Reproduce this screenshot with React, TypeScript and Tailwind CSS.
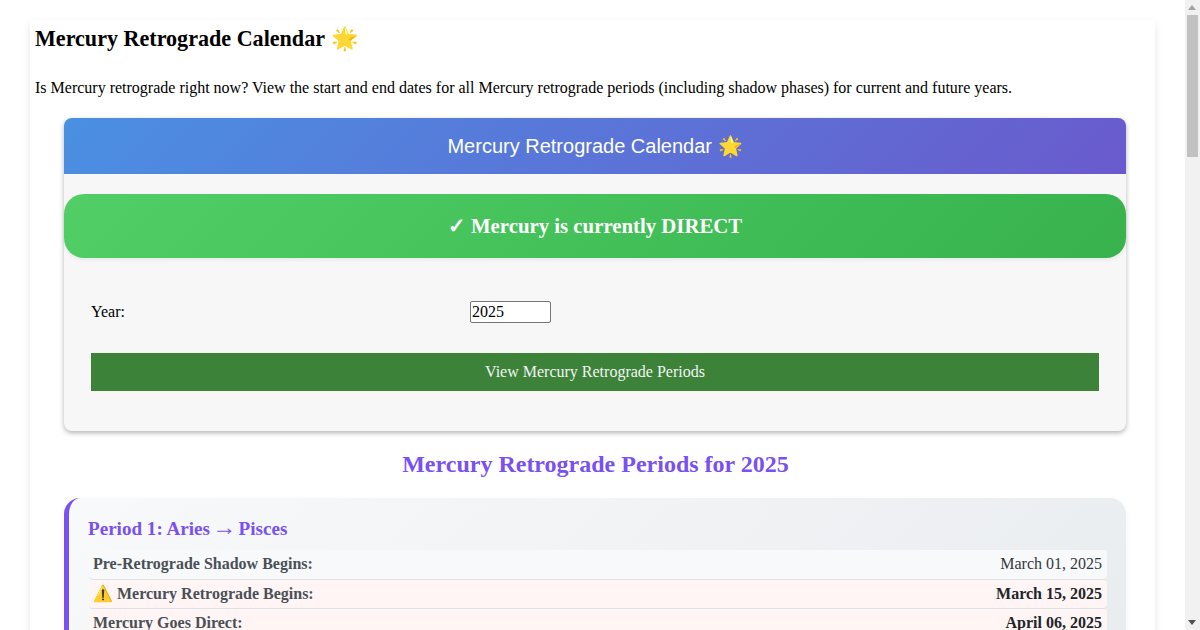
const periods = [
  {
    from: "Period 1: Aries",
    to: "Pisces",
    shadow: "March 01, 2025",
    begins: "March 15, 2025",
    direct: "April 06, 2025",
    ends: "April 26, 2025",
  },
  {
    from: "Period 2: Leo",
    to: "Leo",
    shadow: "June 29, 2025",
    begins: "July 18, 2025",
    direct: "August 11, 2025",
    ends: "August 25, 2025",
  },
  {
    from: "Period 3: Sagittarius",
    to: "Scorpio",
    shadow: "October 21, 2025",
    begins: "November 09, 2025",
    direct: "November 29, 2025",
    ends: "December 17, 2025",
  },
];

function Row({ label, value, alert = false }: { label: string; value: string; alert?: boolean }) {
  return (
    <div
      className={`flex h-[29.5px] items-center justify-between rounded-[4px] border-b border-[#dee2e6] pr-[5px] pl-1 ${
        alert ? "bg-[#fff5f5]" : "bg-[#f8f9fa]"
      }`}
    >
      <span className="font-bold text-[#495057]">{label}</span>
      <span className={alert ? "font-bold text-[#212529]" : "text-[#343a40]"}>{value}</span>
    </div>
  );
}

// the page's scrollbar, which the screenshot shows at the right edge
function Scrollbar() {
  return (
    <div aria-hidden className="fixed top-0 right-0 bottom-0 w-[15px] bg-[#f1f1f1]">
      <div className="absolute top-[5px] left-[3px] h-0 w-0 border-x-[4.5px] border-b-[5px] border-x-transparent border-b-[#a3a3a3]" />
      <div className="absolute top-[15px] left-[2px] h-[142px] w-[11px] bg-[#c1c1c1]" />
      <div className="absolute bottom-[5px] left-[3px] h-0 w-0 border-x-[4.5px] border-t-[5px] border-x-transparent border-t-[#505050]" />
    </div>
  );
}

export default function App() {
  return (
    <div className="min-h-[2660px] bg-white pt-5 font-['Liberation_Serif',serif] text-black">
      <div className="ml-[30px] w-[1125px] bg-white p-[5px] shadow-[0_4px_8px_rgba(0,0,0,0.1)]">
        <h1 className="text-[22.1px] leading-[27px] font-bold">
          Mercury Retrograde Calendar <span className="ml-px">🌟</span>
        </h1>
        <p className="mt-[27px] text-[16px] leading-[18px]">
          Is Mercury retrograde right now? View the start and end dates for all Mercury retrograde periods (including
          shadow phases) for current and future years.
        </p>

        <div className="mt-[21px] ml-[29px] w-[1062px] rounded-[8px] bg-[#f7f7f7] pb-10 shadow-[0_2px_5px_rgba(0,0,0,0.3)]">
          <div className="flex h-14 items-center justify-center rounded-t-[8px] bg-[linear-gradient(135deg,#4a90e2,#6a5acd)] font-['Liberation_Sans',sans-serif] text-[20px] text-white">
            Mercury Retrograde Calendar 🌟
          </div>
          <div className="mt-5 flex h-16 items-center justify-center rounded-[20px] bg-[linear-gradient(135deg,#51cf66,#37b24d)] text-[20.8px] font-bold text-white shadow-[0_2px_4px_rgba(0,0,0,0.06)]">
            ✓ Mercury is currently DIRECT
          </div>
          <div className="mt-[42px] px-[27px]">
            <div className="grid grid-cols-[379px_1fr] items-center">
              <label htmlFor="year" className="text-[16px]">
                Year:
              </label>
              <input
                id="year"
                type="text"
                defaultValue="2025"
                className="h-[22px] w-[81px] rounded-[2px] border border-[#767676] bg-white px-px text-[16px]"
              />
            </div>
            <button
              type="button"
              className="mt-[29px] h-[38px] w-full bg-[#3c8239] text-[16px] text-[#f4f4f4]"
            >
              View Mercury Retrograde Periods
            </button>
          </div>
        </div>

        <h2 className="mt-5 w-[1121px] text-center text-[24px] leading-[27px] font-bold text-[#7950f2]">
          Mercury Retrograde Periods for 2025
        </h2>

        <div className="mt-5 ml-[29px] flex w-[1062px] flex-col gap-5">
          {periods.map((period) => (
            <section
              key={period.from}
              className="rounded-[16px] border-l-[5px] border-[#7950f2] bg-[linear-gradient(135deg,#f8f9fa,#e9ecef)] pt-5 pr-[19px] pb-5 pl-5 shadow-[0_2px_6px_rgba(0,0,0,0.05)]"
            >
              <h3 className="-ml-px text-[19.1px] leading-[21px] font-bold text-[#7950f2]">
                {period.from} <span className="-mx-[2.5px] text-[24px] leading-[0] font-normal">→</span> {period.to}
              </h3>
              <div className="mt-[11px] flex flex-col text-[16px]">
                <Row label="Pre-Retrograde Shadow Begins:" value={period.shadow} />
                <Row label="⚠️ Mercury Retrograde Begins:" value={period.begins} alert />
                <Row label="Mercury Goes Direct:" value={period.direct} alert />
                <Row label="Post-Retrograde Shadow Ends:" value={period.ends} />
              </div>
            </section>
          ))}
        </div>
      </div>
      <Scrollbar />
    </div>
  );
}
